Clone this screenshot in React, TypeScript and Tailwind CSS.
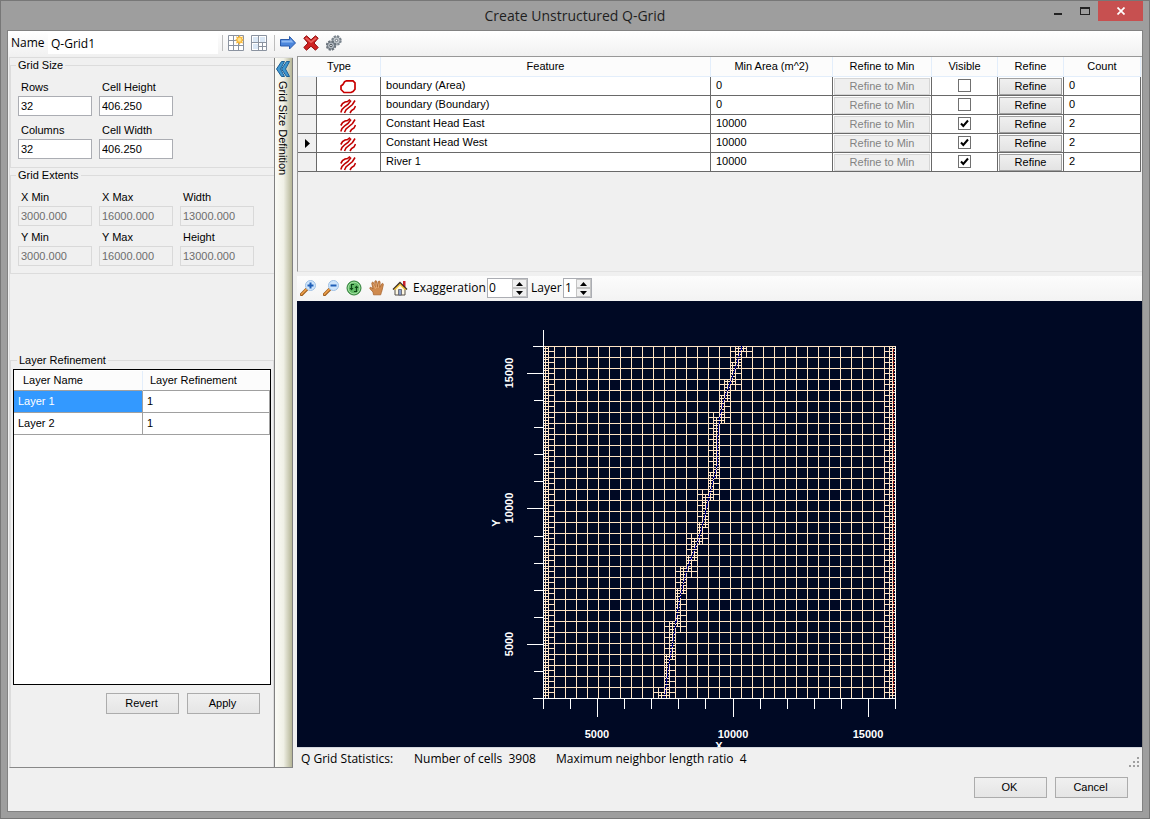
import { useState } from "react";
import type { ReactNode } from "react";

type Point = [number, number];

const features = [
  { name: "boundary (Area)", kind: "area", minArea: "0", visible: false, count: 0 },
  { name: "boundary (Boundary)", kind: "line", minArea: "0", visible: false, count: 0 },
  { name: "Constant Head East", kind: "line", minArea: "10000", visible: true, count: 2 },
  { name: "Constant Head West", kind: "line", minArea: "10000", visible: true, count: 2 },
  { name: "River 1", kind: "line", minArea: "10000", visible: true, count: 2 },
];

const extents = [
  ["X Min", "3000.000"],
  ["X Max", "16000.000"],
  ["Width", "13000.000"],
  ["Y Min", "3000.000"],
  ["Y Max", "16000.000"],
  ["Height", "13000.000"],
];

/* Grid drawing */

const LEFT = 246;
const TOP = 45;
const CELL = 11;
const SIZE = CELL * 32;

// lines are relative to the top left corner of the grid
const river: Point[] = [
  [198.4, 0], [192.7, 19], [187, 35.7], [181.3, 50.7], [177, 67.3], [174.8, 82],
  [173.7, 105.7], [173.7, 119], [170, 133], [165, 152], [161, 170.7], [157.7, 184],
  [154.7, 194], [148.7, 209], [143.7, 222], [140.3, 235.7], [137, 249], [134.3, 264],
  [132.4, 275.7], [129.3, 295.7], [126, 314], [124, 327], [122.3, 342], [120.8, 352],
];
const west: Point[] = [[1, 0], [1, SIZE]];
const east: Point[] = [[350, 0], [350, SIZE]];

function sample(line: Point[]): Point[] {
  const out: Point[] = [];
  for (let i = 1; i < line.length; i++) {
    const [ax, ay] = line[i - 1];
    const [bx, by] = line[i];
    for (let t = 0; t < 1; t += 0.01) out.push([ax + (bx - ax) * t, ay + (by - ay) * t]);
  }
  return out;
}

function buildGrid() {
  const points = [river, west, east].flatMap(sample);
  let d = "";
  const split = (x: number, y: number, size: number, level: number, inside: Point[]) => {
    const hits = inside.filter(([px, py]) => px >= x && px < x + size && py >= y && py < y + size);
    if (level < 2 && hits.length > 0) {
      const half = size / 2;
      split(x, y, half, level + 1, hits);
      split(x + half, y, half, level + 1, hits);
      split(x, y + half, half, level + 1, hits);
      split(x + half, y + half, half, level + 1, hits);
      return;
    }
    const x0 = LEFT + Math.floor(x) + 0.5;
    const y0 = TOP + Math.floor(y) + 0.5;
    const x1 = LEFT + Math.floor(x + size) + 0.5;
    const y1 = TOP + Math.floor(y + size) + 0.5;
    d += `M${x0} ${y1}V${y0}H${x1}`;
  };
  for (let r = 0; r < 32; r++) {
    for (let c = 0; c < 32; c++) split(c * CELL, r * CELL, CELL, 0, points);
  }
  return d;
}

const gridPath = buildGrid();
const ticks = Array.from({ length: 14 }, (_, i) => i + 3);
const offset = (km: number) => Math.round(((km - 3) * SIZE) / 13);
const toPoints = (line: Point[]) => line.map(([x, y]) => `${LEFT + x + 0.5},${TOP + y + 0.5}`).join(" ");

function GridView() {
  const right = LEFT + SIZE + 0.5;
  const bottom = TOP + SIZE + 0.5;
  return (
    <svg width="845" height="446" viewBox="0 0 845 446" className="block shrink-0" role="img" aria-label="Grid">
      <g fill="none" shapeRendering="crispEdges">
        <path d={gridPath} stroke="#ffe4c4" />
        <polyline points={toPoints(river)} stroke="#00008b" strokeDasharray="5 1" />
        <path d={`M${LEFT + 350.5} ${TOP + 3}V${bottom - 5}`} stroke="#8b0000" strokeDasharray="3 1" />
        <path d={`M${LEFT + 0.5} ${TOP - 16}V${bottom}H${right}V${TOP + 0.5}`} stroke="#fff" />
        {ticks.map((km) => {
          const major = km % 5 === 0;
          const x = LEFT + offset(km) + 0.5;
          const y = bottom - offset(km);
          const yLen = major ? 16 : km === 3 || km === 16 ? 10 : 9;
          return (
            <path key={km} stroke="#fff" d={`M${x} ${bottom}v${major ? 18 : 10}M${LEFT} ${y}h${-yLen}`} />
          );
        })}
      </g>
      <g fill="#fff" textAnchor="middle" className="font-['Liberation_Sans',sans-serif] text-[11px] font-bold">
        {[5, 10, 15].map((km) => (
          <g key={km}>
            <text x={LEFT + offset(km)} y="437">{km * 1000}</text>
            <text transform={`translate(216 ${TOP + SIZE - offset(km)}) rotate(-90)`}>{km * 1000}</text>
          </g>
        ))}
        <text transform="translate(203 222) rotate(-90)">Y</text>
        <text x="422" y="449">X</text>
      </g>
    </svg>
  );
}

/* Icons */

function Icon({ children }: { children: ReactNode }) {
  return (
    <svg width="16" height="16" viewBox="0 0 16 16" fill="none" className="block" aria-hidden="true">
      {children}
    </svg>
  );
}

function NewGridIcon() {
  return (
    <Icon>
      <path d="M.5.5h15v15H.5zM5.5.5v15M10.5.5v15M.5 5.5h15M.5 10.5h15" fill="#fff" stroke="#8b93a0" />
      <path d="M11.5 0l1.3 2.2 2.3-.9-.8 2.4L16 5l-1.8 1.1.8 2.3-2.3-.7L11.5 10l-1.2-2.3-2.3.7.8-2.3L7 5l1.8-1.3L8 1.3l2.3.9z" fill="#f8b83a" />
      <circle cx="11.5" cy="4.8" r="2" fill="#ffe28a" />
    </Icon>
  );
}

function RefineGridIcon() {
  return (
    <Icon>
      <path d="M.5.5h15v15H.5z" fill="#fff" stroke="#8b93a0" />
      <path d="M2 2h5v5H2zM9 2h5v5H9zM2 9h5v5H2z" fill="#dbe8f6" />
      <path d="M7.5 1v14M1 7.5h14M11.5 8v7M8 11.5h7" stroke="#8b93a0" />
    </Icon>
  );
}

function ArrowIcon() {
  return (
    <Icon>
      <path d="M.5 4.5h9v-3l6 6.500-6 6v-3h-9z" fill="#4b86dc" stroke="#2a5bab" />
      <path d="M1.5 5.5h9V4l3 3.5h-12z" fill="#8fb9f2" />
    </Icon>
  );
}

function DeleteIcon() {
  return (
    <Icon>
      <path d="M3.5.8L8 4.8 12.5.8 15.2 3.2 11 8l4.200 4.500-2.700 2.700L8 11.200l-4.500 4-2.700-2.700L5 8 .8 3.200z" fill="#cf2222" stroke="#8f1111" />
      <path d="M3.500 2.200L8 6.200l4.500-4L14 3.400 8 8.200 2 3.400z" fill="#e8605a" />
    </Icon>
  );
}

function GearsIcon() {
  return (
    <Icon>
      <circle cx="10.500" cy="5.500" r="4" stroke="#7b858e" strokeWidth="2.500" strokeDasharray="2.100 1.040" />
      <circle cx="10.500" cy="5.500" r="3.600" fill="#c5cbd0" stroke="#7f8890" />
      <circle cx="10.500" cy="5.500" r="1.200" fill="#fff" stroke="#69727b" />
      <circle cx="5" cy="10.500" r="4" stroke="#69727b" strokeWidth="2.500" strokeDasharray="2.100 1.040" />
      <circle cx="5" cy="10.500" r="3.600" fill="#b3bac1" stroke="#69727b" />
      <circle cx="5" cy="10.500" r="1.200" fill="#fff" stroke="#4a525a" />
    </Icon>
  );
}

function ZoomIcon({ plus }: { plus?: boolean }) {
  return (
    <Icon>
      <path d="M1.500 14.500L6.500 9.500" stroke="#9b5a1c" strokeWidth="3.200" strokeLinecap="round" />
      <path d="M1.500 14.200L6.300 9.400" stroke="#eda04a" strokeWidth="1.600" strokeLinecap="round" />
      <circle cx="10.500" cy="5.500" r="5" fill="#cfe5fb" stroke="#9dbfe4" />
      <path d={plus ? "M7.500 5.500h6M10.500 2.500v6" : "M7.500 5.500h6"} stroke="#1f5fb8" strokeWidth="2" />
    </Icon>
  );
}

function RefreshIcon() {
  return (
    <Icon>
      <circle cx="8" cy="8" r="7" fill="#63bd68" stroke="#2f7d38" />
      <circle cx="8" cy="8" r="5.800" stroke="#a3dda3" />
      <path d="M8 4.500H5.500v5M10.500 6.500v5H8" stroke="#0d4717" strokeWidth="1.200" />
      <path d="M3.500 8h4l-2 2.500zM8.500 8h4l-2-2.500z" fill="#0d4717" />
    </Icon>
  );
}

function HandIcon() {
  return (
    <Icon>
      <path
        d="M4.500 14.800L4 12 1 8.800C.3 7.500 1.600 6.800 2.500 7.700L4 9 2.800 3.500C2.600 2 4.300 1.700 4.700 3L6 7 5.800 1.800c0-1.500 1.900-1.500 2 0L8.300 6.800 9.200 2c.3-1.400 2-1.100 1.900.3L10.900 7.300 12.500 4c.7-1.200 2.200-.5 1.800.8L13 10.500c-.3 1.600-1 2.500-1.300 4.300z"
        fill="#cf8a4e"
        stroke="#a8642f"
        strokeWidth=".8"
      />
      <path d="M4.500 4l2 5M7 3l.5 5M10 3.500L9.300 8" stroke="#e6b07e" strokeWidth=".8" />
    </Icon>
  );
}

function HomeIcon() {
  return (
    <Icon>
      <path d="M11 1h2.500v6H11z" fill="#c9202a" />
      <path d="M3 8.500L8 3.500l5 5v6.500H3z" fill="#fdf6e0" stroke="#55504a" />
      <path d="M1 9.500L8 2.500l7 7" stroke="#3b2b20" strokeWidth="1.400" />
      <path d="M2.500 9.700L8 4.300l5.500 5.400" stroke="#f2c230" strokeWidth="1.300" />
      <path d="M6.500 9.500h3v5.500h-3z" fill="#8fa4cc" stroke="#5a5a66" strokeWidth=".8" />
    </Icon>
  );
}

function FeatureIcon({ kind }: { kind: string }) {
  return (
    <svg width="16" height="16" viewBox="0 0 16 16" fill="none" className="mx-auto block" aria-hidden="true">
      {kind === "area" ? (
        <path d="M4.500 2.800L6.500 1.800H13l2 2v6.400l-2 2.300-2 1H4l-3-3V7L3 5.500z" stroke="#c80000" strokeWidth="1.700" />
      ) : (
        <path
          d="M.8 8.500L2.500 5.500 5 4l2.500-.5L10 1.500M.8 14.500L2 11.500 5 8.500l3-2 3-4M4.500 15L6 12l3.500-3 3-2.500L15 2.500M10 15l1.500-2.500L14 11l1.500-3"
          stroke="#c00000"
          strokeWidth="1.600"
        />
      )}
    </svg>
  );
}

/* Controls */

function ToolButton({ label, children }: { label: string; children: ReactNode }) {
  return (
    <button type="button" aria-label={label} className="block">
      {children}
    </button>
  );
}

function PushButton({ children }: { children: ReactNode }) {
  return (
    <button
      type="button"
      className="h-[21px] w-[73px] border border-[#acacac] bg-linear-to-b from-[#f0f0f0] to-[#e5e5e5] pr-0.5 text-center leading-[19px]"
    >
      {children}
    </button>
  );
}

function Field({ label, value, disabled }: { label: string; value: string; disabled?: boolean }) {
  return (
    <label className="block">
      <span className="block h-4 pl-[3px] leading-[14px]">{label}</span>
      <input
        type="text"
        defaultValue={value}
        disabled={disabled}
        className="block h-5 w-full border border-[#abadb3] bg-white px-0.5 disabled:border-[#d9d9d9] disabled:bg-[#f0f0f0] disabled:text-[#6d6d6d]"
      />
    </label>
  );
}

function Spinner({ id, start, className }: { id: string; start: number; className: string }) {
  const [value, setValue] = useState(start);
  return (
    <span className={`flex h-5 border border-[#abadb3] bg-white ${className}`}>
      <input
        id={id}
        type="text"
        value={value}
        onChange={(e) => setValue(Number(e.target.value) || 0)}
        className="min-w-0 flex-1 pl-px"
      />
      <span className="flex w-[15px] flex-col bg-[#f0f0f0]">
        {[1, -1].map((step) => (
          <button
            key={step}
            type="button"
            aria-label={step > 0 ? "Increase" : "Decrease"}
            onClick={() => setValue(value + step)}
            className="flex flex-1 items-center justify-center border border-[#c4c4c4]"
          >
            <svg width="7" height="4" viewBox="0 0 7 4" aria-hidden="true">
              <path d={step > 0 ? "M0 4L3.500 0 7 4z" : "M0 0l3.500 4L7 0z"} fill="#000" />
            </svg>
          </button>
        ))}
      </span>
    </span>
  );
}

function TitleBar() {
  return (
    <header className="grid h-[29px] shrink-0 grid-cols-[1fr_auto_1fr] px-1.5">
      <h1 className="col-start-2 font-['Open_Sans',sans-serif] text-[14px] leading-[29px] text-[#1e1e1e]">
        Create Unstructured Q-Grid
      </h1>
      <div className="flex items-start justify-end">
        <button type="button" aria-label="Minimize" className="flex h-5 w-[27px] justify-center pt-3">
          <span className="h-0.5 w-2 bg-[#222]" />
        </button>
        <button type="button" aria-label="Maximize" className="flex h-5 w-[27px] justify-center pt-1.5">
          <span className="h-2 w-2.5 border border-t-2 border-[#222]" />
        </button>
        <button type="button" aria-label="Close" className="flex h-5 w-[45px] items-center justify-center bg-[#c75050]">
          <svg width="8" height="8" viewBox="0 0 8 8" aria-hidden="true">
            <path d="M.5.5l7 7M7.500.5l-7 7" stroke="#fff" strokeWidth="1.700" />
          </svg>
        </button>
      </div>
    </header>
  );
}

function MainToolbar() {
  return (
    <div className="flex h-[25px] shrink-0 items-center bg-linear-to-b from-white to-[#f1f1f1] pb-px pl-[3px] font-['Open_Sans',sans-serif] text-[12px]">
      <label htmlFor="name" className="w-[37px]">Name</label>
      <input id="name" type="text" defaultValue="Q-Grid1" className="h-[22px] w-[170px] bg-white pl-[3px]" />
      <span className="mx-1 h-4 w-px bg-[#bdbdbd]" />
      <div className="flex gap-[7px] px-px">
        <ToolButton label="New grid"><NewGridIcon /></ToolButton>
        <ToolButton label="Refine grid"><RefineGridIcon /></ToolButton>
      </div>
      <span className="mx-[5px] ml-1.5 h-4 w-px bg-[#bdbdbd]" />
      <div className="flex gap-[7px]">
        <ToolButton label="Export"><ArrowIcon /></ToolButton>
        <ToolButton label="Delete"><DeleteIcon /></ToolButton>
        <ToolButton label="Settings"><GearsIcon /></ToolButton>
      </div>
    </div>
  );
}

function GridSizePanel() {
  return (
    <aside className="my-px mr-1 ml-px flex w-[284px] shrink-0 border border-r-0 border-[#dcdcdc] border-b-[#888]">
      <div className="flex min-w-0 flex-1 flex-col">
        {/* Grid size */}
        <fieldset className="border border-r-0 border-[#dcdcdc] px-[7px] pb-2">
          <legend className="-ml-0.5 px-0.5 leading-[15px]">Grid Size</legend>
          <div className="grid grid-cols-[74px_74px] gap-[7px] pt-[7px]">
            <Field label="Rows" value="32" />
            <Field label="Cell Height" value="406.250" />
            <Field label="Columns" value="32" />
            <Field label="Cell Width" value="406.250" />
          </div>
        </fieldset>

        {/* Grid extents */}
        <fieldset className="border border-r-0 border-[#dcdcdc] px-[7px] pb-[7px]">
          <legend className="-ml-0.5 px-0.5 leading-[15px]">Grid Extents</legend>
          <div className="grid grid-cols-[74px_74px_74px] gap-x-[7px] gap-y-1 pt-[7px]">
            {extents.map(([label, value]) => (
              <Field key={label} label={label} value={value} disabled />
            ))}
          </div>
        </fieldset>

        {/* Layer refinement */}
        <fieldset className="mt-[79px] flex-1 border border-b-0 border-[#dcdcdc] px-0.5">
          <legend className="ml-1 px-0.5 leading-[15px]">Layer Refinement</legend>
          <div className="mt-px h-79 border border-black bg-white pt-px">
            <table className="w-full table-fixed border-separate border-spacing-0 text-left">
              <colgroup>
                <col className="w-[129px]" />
                <col />
              </colgroup>
              <thead>
                <tr className="h-5">
                  <th className="border-r border-b border-r-[#e3eefb] border-b-[#a0a0a0] bg-[#fcfcfc] p-0 pl-[9px] font-normal">Layer Name</th>
                  <th className="border-b border-[#a0a0a0] bg-[#fcfcfc] p-0 pl-[7px] font-normal">Layer Refinement</th>
                </tr>
              </thead>
              <tbody>
                <tr className="h-[22px]">
                  <td className="border-r border-b border-[#a0a0a0] bg-[#3399ff] p-0 pl-1 text-white">Layer 1</td>
                  <td className="border-r border-b border-[#a0a0a0] p-0 pl-1">1</td>
                </tr>
                <tr className="h-[22px]">
                  <td className="border-r border-b border-[#a0a0a0] p-0 pl-1">Layer 2</td>
                  <td className="border-r border-b border-[#a0a0a0] p-0 pl-1">1</td>
                </tr>
              </tbody>
            </table>
          </div>
          <div className="mt-2 flex justify-end gap-2 pr-[11px]">
            <PushButton>Revert</PushButton>
            <PushButton>Apply</PushButton>
          </div>
        </fieldset>
      </div>

      {/* Collapse strip */}
      <button
        type="button"
        className="flex w-[19px] shrink-0 flex-col items-start border-x border-[#808080] bg-linear-to-r from-[#fbfbf6] via-[#f0f0e6] via-50% to-[#b5b596] pt-[3px]"
      >
        <svg width="14" height="16" viewBox="0 0 14 16" fill="none" className="ml-px" aria-hidden="true">
          <path d="M5.500.5h3L4.500 8l4 7.500h-3L.5 8z" fill="#3f97d0" stroke="#1b5e95" />
          <path d="M10.500.5h3L9.500 8l4 7.500h-3L5.500 8z" fill="#3f97d0" stroke="#1b5e95" />
        </svg>
        <span className="pt-1 leading-4 [writing-mode:vertical-rl]">Grid Size Definition</span>
      </button>
    </aside>
  );
}

const head = "border-r border-b border-[#e3eefb] bg-[#fcfcfc] p-0 text-center font-normal";
const cell = "border-r border-b border-[#696969] bg-white p-0";

function FeatureTable() {
  return (
    <div className="h-54 shrink-0 overflow-hidden border border-r-0 border-[#989898] border-b-[#e3e3e3] pr-px">
      <table className="w-full table-fixed border-separate border-spacing-0">
        <colgroup>
          <col className="w-[19px]" />
          <col className="w-16" />
          <col />
          <col className="w-[122px]" />
          <col className="w-[99px]" />
          <col className="w-[66px]" />
          <col className="w-[66px]" />
          <col className="w-[77px]" />
        </colgroup>
        <thead>
          <tr className="h-5">
            <th colSpan={2} className={head}>Type</th>
            <th className={head}>Feature</th>
            <th className={head}>Min Area (m^2)</th>
            <th className={head}>Refine to Min</th>
            <th className={head}>Visible</th>
            <th className={head}>Refine</th>
            <th className={head}>Count</th>
          </tr>
        </thead>
        <tbody>
          {features.map((f) => (
            <tr key={f.name} className="h-[19px] leading-[14px]">
              <td className="border-r border-b border-[#696969] bg-[#f0f0f0] p-0">
                {f.name === "Constant Head West" && (
                  <svg width="5" height="9" viewBox="0 0 5 9" className="ml-[7px] block" aria-hidden="true">
                    <path d="M0 0l5 4.500L0 9z" fill="#000" />
                  </svg>
                )}
              </td>
              <td className={`${cell} pt-0.5 pr-0.5`}><FeatureIcon kind={f.kind} /></td>
              <td className={`${cell} pb-0.5 pl-[5px]`}>{f.name}</td>
              <td className={`${cell} pb-0.5 pl-[5px]`}>{f.minArea}</td>
              <td className={`${cell} px-px`}>
                <button type="button" disabled className="block h-[17px] w-full border border-[#d5d5d5] bg-[#efefef] text-[#838383]">
                  Refine to Min
                </button>
              </td>
              <td className={`${cell} pb-px`}>
                <span className="relative mx-auto block size-[13px]">
                  <input
                    type="checkbox"
                    defaultChecked={f.visible}
                    aria-label={`Show ${f.name}`}
                    className="peer block size-[13px] appearance-none border border-[#707070] bg-white"
                  />
                  <svg width="13" height="13" viewBox="0 0 13 13" fill="none" className="pointer-events-none absolute inset-0 hidden peer-checked:block" aria-hidden="true">
                    <path d="M3 6.500L5.300 9 10 3.500" stroke="#000" strokeWidth="2" />
                  </svg>
                </span>
              </td>
              <td className={`${cell} px-px`}>
                <button type="button" className="block h-[17px] w-full border border-[#a0a0a0] bg-linear-to-b from-[#f0f0f0] to-[#e3e3e3]">
                  Refine
                </button>
              </td>
              <td className={`${cell} pb-0.5 pl-[5px]`}>{f.count}</td>
            </tr>
          ))}
        </tbody>
      </table>
    </div>
  );
}

function ViewToolbar() {
  return (
    <div className="mt-1 flex h-[25px] shrink-0 items-center bg-linear-to-b from-[#fcfcfc] to-[#f3f3f3] pb-px pl-[3px] font-['Open_Sans',sans-serif] text-[12px]">
      <div className="flex gap-[7px]">
        <ToolButton label="Zoom in"><ZoomIcon plus /></ToolButton>
        <ToolButton label="Zoom out"><ZoomIcon /></ToolButton>
        <ToolButton label="Refresh"><RefreshIcon /></ToolButton>
        <ToolButton label="Pan"><HandIcon /></ToolButton>
        <ToolButton label="Home"><HomeIcon /></ToolButton>
      </div>
      <label htmlFor="exaggeration" className="w-[79px] pl-[5px] whitespace-nowrap">Exaggeration</label>
      <Spinner id="exaggeration" start={0} className="w-[41px]" />
      <label htmlFor="layer" className="w-[35px] pl-[3px]">Layer</label>
      <Spinner id="layer" start={1} className="w-[29px]" />
    </div>
  );
}

function StatusBar() {
  return (
    <div className="flex h-[22px] shrink-0 items-center border-t border-[#d5d8df] pr-0.5 pl-1 font-['Open_Sans',sans-serif] text-[12px]">
      <span className="w-[113px]">Q Grid Statistics:</span>
      <span className="w-[142px]">Number of cells&nbsp; 3908</span>
      <span>Maximum neighbor length ratio&nbsp; 4</span>
      <svg width="11" height="12" viewBox="0 0 11 12" className="ml-auto self-end" aria-hidden="true">
        <path d="M8 0h2v2H8zM4 4h2v2H4zM8 4h2v2H8zM0 8h2v2H0zM4 8h2v2H4zM8 8h2v2H8z" fill="#a0a0a0" />
      </svg>
    </div>
  );
}

export default function App() {
  return (
    <div className="flex min-h-screen flex-col border border-[#777] bg-[#9e9e9e] font-['Liberation_Sans',sans-serif] text-[11px] text-black">
      <TitleBar />
      <main className="mx-1.5 mb-1.5 flex flex-1 flex-col border border-[#828282] bg-[#f0f0f0]">
        <MainToolbar />
        <div className="flex flex-1">
          <GridSizePanel />
          <section className="flex min-w-0 flex-1 flex-col">
            <FeatureTable />
            <ViewToolbar />
            <div className="flex flex-1 justify-center overflow-hidden bg-[#000924]">
              <GridView />
            </div>
            <StatusBar />
          </section>
        </div>
        <footer className="flex shrink-0 justify-end gap-2 pt-2 pr-3.5 pb-[13px]">
          <PushButton>OK</PushButton>
          <PushButton>Cancel</PushButton>
        </footer>
      </main>
    </div>
  );
}
